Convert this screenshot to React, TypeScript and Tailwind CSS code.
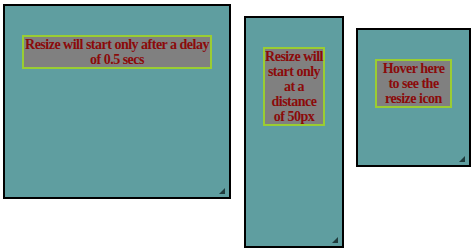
import React from 'react';

// Resizable demo boxes: teal panels with a grey caption and a grip in the corner
interface BoxProps {
  label: string;
  className: string;
}

function ResizeGrip() {
  return (
    <svg className="absolute right-[4px] bottom-[3px]" width="6" height="6" viewBox="0 0 6 6">
      <polygon points="6,0 6,6 0,6" fill="#1f3b3c" />
    </svg>
  );
}

function ResizableBox({ label, className }: BoxProps) {
  return (
    <div className={`relative shrink-0 border-2 border-black bg-[#5f9ea0] pt-[29px] px-[17px] ${className}`}>
      <div className="border-2 border-[#9acd32] bg-[#808080] text-center text-[14px] leading-[15px] tracking-[-0.5px] font-bold text-[#8b0a0a] [font-family:'Liberation_Serif',serif]">
        {label}
      </div>
      <ResizeGrip />
    </div>
  );
}

export default function App() {
  return (
    <div className="flex items-start bg-white pl-[3px] pt-[4px] w-[474px] h-[251px] overflow-hidden">
      <ResizableBox
        label="Resize will start only after a delay of 0.5 secs"
        className="w-[228px] h-[195px]"
      />
      <ResizableBox
        label="Resize will start only at a distance of 50px"
        className="w-[100px] h-[232px] mt-[12px] ml-[13px]"
      />
      <ResizableBox
        label="Hover here to see the resize icon"
        className="w-[115px] h-[139px] mt-[24px] ml-[12px]"
      />
    </div>
  );
}
